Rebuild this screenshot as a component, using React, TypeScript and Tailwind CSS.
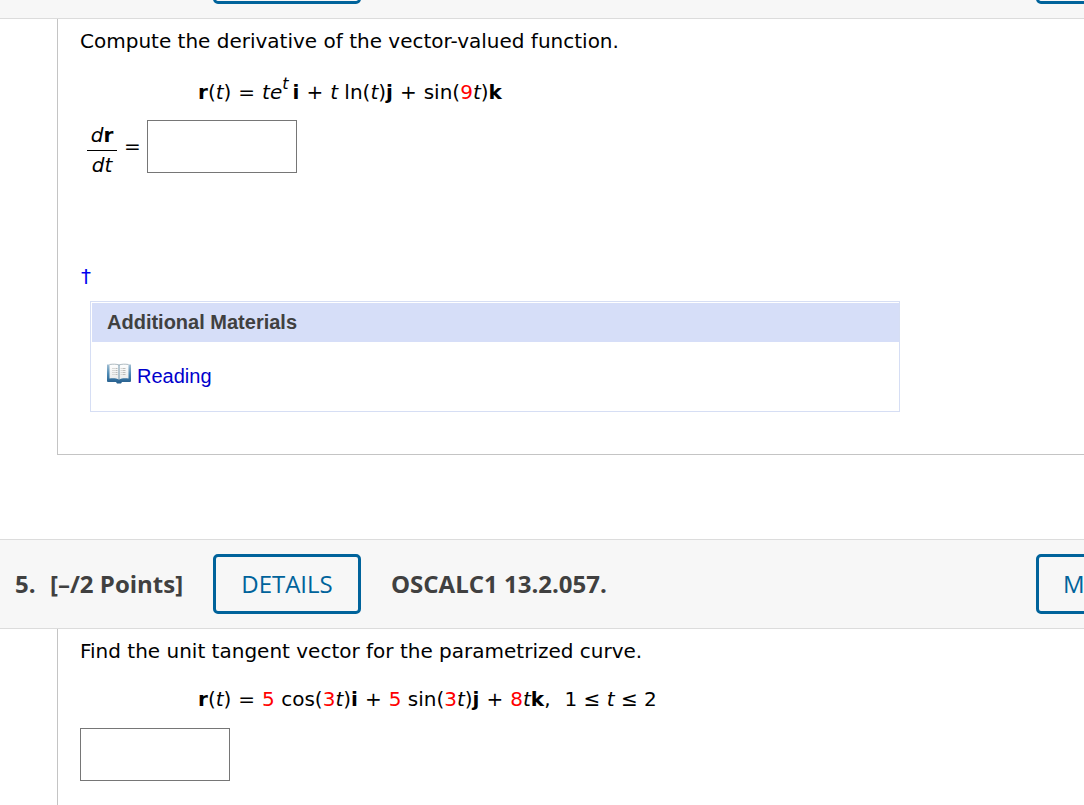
import type { ReactNode } from "react";

function BookIcon() {
  return (
    <svg width="24" height="22" viewBox="0 0 24 22" aria-hidden="true" className="shrink-0">
      <defs>
        <linearGradient id="cover" x1="0" y1="0" x2="0" y2="1">
          <stop offset="0" stopColor="#a3bfd3" />
          <stop offset="0.5" stopColor="#4a88b4" />
          <stop offset="1" stopColor="#245c8a" />
        </linearGradient>
        <linearGradient id="page" x1="0" y1="0" x2="0" y2="1">
          <stop offset="0" stopColor="#ffffff" />
          <stop offset="1" stopColor="#e9ebea" />
        </linearGradient>
      </defs>
      <path d="M0 1.500H24V18Q24 19 23 19H15L14 20.500H10L9 19H1Q0 19 0 18Z" fill="url(#cover)" />
      <path d="M2.500 1C6 .5 9.500 .5 12 1.500C14.500 .5 18 .5 21.500 1V15.500C18 15 14.500 15.200 12 16.500C9.500 15.200 6 15 2.500 15.500Z" fill="url(#page)" />
      <path d="M2.500 1.500C6 1 9.500 1 12 2C14.500 1 18 1 21.500 1.500" stroke="#9aa9b2" strokeWidth="0.8" fill="none" />
      <path d="M12 2V16.500" stroke="#6f93aa" strokeWidth="1" />
      <path d="M5 5.500H8M5 7.500H8M5 9.500H8M5 11.500H8M13.500 5.500H16M13.500 7.500H16M13.500 9.500H16M13.500 11.500H16" stroke="#d9d9d7" strokeWidth="1" />
      <path d="M8.500 5.500H10.500M8.500 7.500H10.500M8.500 9.500H10.500M8.500 11.500H10.500M16 5.500H18.500M16 7.500H18.500M16 9.500H18.500M16 11.500H18.500" stroke="#bdbdbb" strokeWidth="1" />
    </svg>
  );
}

function OutlineButton({ children, label, className = "" }: { children?: ReactNode; label?: string; className?: string }) {
  return (
    <button
      type="button"
      aria-label={label}
      className={`h-[60px] w-[148px] shrink-0 whitespace-nowrap rounded-[5px] border-3 border-[#00639b] text-2xl text-[#00639b] ${className}`}
    >
      {children}
    </button>
  );
}

function Red({ children }: { children: ReactNode }) {
  return <span className="text-[#ff0000]">{children}</span>;
}

function Equation({ children }: { children: ReactNode }) {
  return <p className="ml-[118px] flex items-baseline gap-[7px] whitespace-nowrap leading-6">{children}</p>;
}

export default function App() {
  return (
    <div className="min-h-screen overflow-x-hidden bg-white font-['DejaVu_Sans',Verdana,sans-serif] text-xl text-black">
      <header className="flex h-[19px] items-end overflow-hidden border-b border-[#dcdcdc] bg-[#f7f7f7] pb-[14px] pl-[213px]">
        <OutlineButton label="Details" />
        <OutlineButton label="My notes" className="-mr-[100px] ml-auto" />
      </header>

      <section className="ml-[57px] border-b border-l border-[#c4c4c4] pb-[42px] pl-[22px]">
        <p className="pt-[10px] leading-6">Compute the derivative of the vector-valued function.</p>
        <div className="pt-[27px]">
          <Equation>
            <span><b>r</b>(<i>t</i>)</span>
            <span>=</span>
            <span><i>te</i><sup className="-top-[10px] text-base italic leading-none">t</sup><b className="ml-1">i</b></span>
            <span>+</span>
            <span><i>t</i> ln(<i>t</i>)<b>j</b></span>
            <span>+</span>
            <span>sin(<Red>9</Red><i>t</i>)<b>k</b></span>
          </Equation>
        </div>
        <div className="mt-4 flex items-start">
          <div className="ml-[7px] flex w-[30px] flex-col text-center leading-[30px]">
            <span className="border-b border-black"><i>d</i><b>r</b></span>
            <i className="leading-[29px]">dt</i>
          </div>
          <span className="mx-[7px] w-4 text-center leading-[53px]">=</span>
          <input aria-label="dr/dt" className="h-[53px] w-[150px] border border-[#767676] bg-white px-2" />
        </div>
        <p className="mt-[84px] leading-6">
          <a href="#note" className="ml-px text-[#0000ee]">†</a>
        </p>
        <div className="ml-[10px] mt-[13px] max-w-[810px] border border-[#d6def4] pl-px pt-px font-['Liberation_Sans',Arial,sans-serif]">
          <h2 className="bg-[#d6def8] px-[15px] py-[5px] font-bold leading-[29px] text-[#404040]">Additional Materials</h2>
          <a href="#reading" className="flex items-start gap-[6px] px-[15px] py-[21px] leading-[27px] text-[#0000cc]">
            <BookIcon />
            Reading
          </a>
        </div>
      </section>

      <header className="mt-[84px] flex items-center overflow-hidden border-y border-[#dcdcdc] bg-[#f7f7f7] py-[14px] pl-[15px] font-['Open_Sans',sans-serif] text-2xl font-bold text-[#404040]">
        <span className="w-[35px]">5.</span>
        <span className="w-[163px] whitespace-nowrap">[–/2 Points]</span>
        <OutlineButton className="font-normal">DETAILS</OutlineButton>
        <h2 className="ml-[30px] whitespace-nowrap">OSCALC1 13.2.057.</h2>
        <OutlineButton className="-mr-[100px] ml-auto pl-6 text-left font-normal">MY NOTES</OutlineButton>
      </header>

      <section className="ml-[57px] border-l border-[#c4c4c4] pb-6 pl-[22px]">
        <p className="pt-[10px] leading-6">Find the unit tangent vector for the parametrized curve.</p>
        <div className="pt-6">
          <Equation>
            <span><b>r</b>(<i>t</i>)</span>
            <span>=</span>
            <span><Red>5</Red> cos(<Red>3</Red><i>t</i>)<b>i</b></span>
            <span>+</span>
            <span><Red>5</Red> sin(<Red>3</Red><i>t</i>)<b>j</b></span>
            <span>+</span>
            <span><Red>8</Red><i>t</i><b>k</b>,</span>
            <span className="ml-[7px]">1 ≤ <i>t</i> ≤ 2</span>
          </Equation>
        </div>
        <input aria-label="Unit tangent vector" className="mt-[17px] block h-[53px] w-[150px] border border-[#767676] bg-white px-2" />
      </section>
    </div>
  );
}
